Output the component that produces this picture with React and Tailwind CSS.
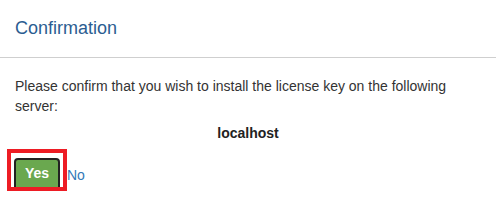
import React from 'react';

function App() {
  return (
    <div className="w-[496px] h-[203px] bg-white font-['Liberation_Sans',Arial,sans-serif] overflow-hidden">
      {/* header */}
      <div className="px-[15px] pt-[15px] pb-[16px] border-b border-[#cfcfcf]">
        <h4 className="text-[18px] leading-[26px] text-[#2b5d91]">Confirmation</h4>
      </div>

      {/* body */}
      <div className="px-[15px] pt-[18px]">
        <p className="text-[14px] leading-[20px] text-[#333]">
          Please confirm that you wish to install the license key on the following server:
        </p>
        <p className="mt-[7px] text-center text-[14px] leading-[20px] font-bold text-[#222]">localhost</p>

        <div className="flex items-start mt-[6px] ml-[-8px]">
          <div className="w-[60px] h-[42px] border-4 border-[#ed1c24] overflow-hidden">
            <button className="ml-[3px] mt-[5px] w-[46px] h-[34px] rounded-[4px] border-2 border-[#222] bg-[#6aa84f] text-white font-bold text-[14px] leading-[20px] pt-[3px] flex justify-center items-start">
              Yes
            </button>
          </div>
          <a href="#" className="mt-[16px] text-[14px] leading-[20px] text-[#337ab7]">No</a>
        </div>
      </div>
    </div>
  );
}

export default App;
